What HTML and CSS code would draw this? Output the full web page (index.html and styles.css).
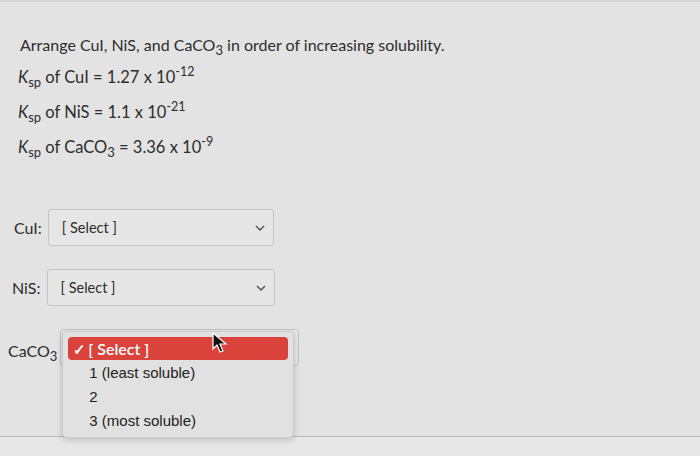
FILE: index.html
```html
<!DOCTYPE html>
<html lang="en">
<head>
    <meta charset="UTF-8">
    <title>Solubility Order</title>
    <link rel="stylesheet" href="styles.css">
</head>
<body>
    <div class="question">
        <div class="question-text">
            <p class="intro">Arrange CuI, NiS, and CaCO<sub>3</sub> in order of increasing solubility.</p>
            <p class="ksp"><i>K</i><sub>sp</sub> of CuI = 1.27 x 10<sup>-12</sup></p>
            <p class="ksp"><i>K</i><sub>sp</sub> of NiS = 1.1 x 10<sup>-21</sup></p>
            <p class="ksp"><i>K</i><sub>sp</sub> of CaCO<sub>3</sub> = 3.36 x 10<sup>-9</sup></p>
        </div>

        <div class="answers">
            <div class="answer-row row-cui">
                <span class="answer-label">CuI:</span>
                <div class="select-box">
                    <span>[ Select ]</span>
                    <svg class="caret" width="10" height="6" viewBox="0 0 10 6"><path d="M1 1 L5 5 L9 1" fill="none" stroke="#555" stroke-width="1.5"/></svg>
                </div>
            </div>
            <div class="answer-row row-nis">
                <span class="answer-label">NiS:</span>
                <div class="select-box">
                    <span>[ Select ]</span>
                    <svg class="caret" width="10" height="6" viewBox="0 0 10 6"><path d="M1 1 L5 5 L9 1" fill="none" stroke="#555" stroke-width="1.5"/></svg>
                </div>
            </div>
            <div class="answer-row row-caco3">
                <span class="answer-label">CaCO<sub>3</sub></span>
                <div class="select-box open">
                    <svg class="caret small" width="6" height="6" viewBox="0 0 6 6"><path d="M1 5 L4 1" fill="none" stroke="#555" stroke-width="1.2"/></svg>
                    <!-- native dropdown list, open -->
                    <ul class="menu">
                        <li class="picked"><span class="check">✓</span>[ Select ]</li>
                        <li>1 (least soluble)</li>
                        <li>2</li>
                        <li>3 (most soluble)</li>
                    </ul>
                    <svg class="pointer" width="16" height="22" viewBox="0 0 16 22">
                        <path d="M1 1 L1 17 L5 13 L8 20 L11 19 L8 12 L14 12 Z" fill="#111" stroke="#fff" stroke-width="1.2"/>
                    </svg>
                </div>
            </div>
        </div>
    </div>
    <div class="footer-rule"></div>
</body>
</html>
```

FILE: styles.css
```css
body {
    margin: 0;
    background: #e3e3e3;
    color: #2d2d2d;
    font-family: Lato, "Open Sans", sans-serif;
    width: 700px;
    height: 456px;
    overflow: hidden;
    border-top: 2px solid #d4d4d4;
    box-sizing: border-box;
}
.question {
    height: 434px;
    padding: 0 0 0 20px;
    box-sizing: border-box;
}
.question-text {
    padding-top: 28px;
}
.question-text p {
    margin: 0;
    height: 35px;
    font-size: 16px;
    line-height: 35px;
}
.question-text p.intro {
    height: 30px;
    line-height: 30px;
}
.question-text p.ksp {
    margin-left: -2px;
    font-size: 16.5px;
}
sub {
    font-size: 13px;
    vertical-align: -4px;
    line-height: 0;
}
sup {
    font-size: 12.5px;
    vertical-align: 7px;
    line-height: 0;
}
.answers {
    padding-top: 44px;
}
.answer-row {
    display: flex;
    align-items: center;
    gap: 6px;
    height: 37px;
    margin-bottom: 23px;
    font-size: 16px;
}
.row-cui { margin-left: -6px; }
.row-nis { margin-left: -8px; }
.row-caco3 { margin-left: -12px; gap: 3px; }
.row-caco3 .answer-label { margin-top: 6px; }
.select-box {
    position: relative;
    width: 226px;
    height: 37px;
    box-sizing: border-box;
    border: 1px solid #c4c4c4;
    border-radius: 3px;
    background: #e6e6e6;
    display: flex;
    align-items: center;
    justify-content: space-between;
    padding: 0 8px 0 13px;
    font-size: 14.5px;
}
.row-nis .select-box { width: 228px; }
.row-caco3 .select-box { width: 239px; justify-content: flex-end; }
.caret.small { margin-top: -10px; margin-right: -4px; }
.menu {
    position: absolute;
    left: 1px;
    top: 1px;
    width: 232px;
    margin: 0;
    padding: 5px 5px 4px 5px;
    box-sizing: border-box;
    list-style: none;
    background: #e1e1e1;
    border: 1px solid #cacaca;
    border-radius: 5px;
    box-shadow: 0 2px 6px rgba(0, 0, 0, 0.18);
    font-family: "Liberation Sans", Arial, sans-serif;
    font-size: 15px;
    color: #222;
}
.menu li {
    height: 24px;
    line-height: 24px;
    padding-left: 21px;
}
.menu li.picked {
    background: #d9433c;
    color: #fff;
    border-radius: 4px;
    padding-left: 5px;
    height: 23px;
    line-height: 23px;
    margin-bottom: 1px;
    font-family: Lato, sans-serif;
    font-size: 16px;
    font-weight: 600;
}
.check {
    display: inline-block;
    width: 15px;
    font-size: 15px;
    font-weight: 700;
}
.pointer {
    position: absolute;
    left: 151px;
    top: 2px;
}
.footer-rule {
    border-top: 1px solid #b9b9b9;
    height: 20px;
    background: #e7e7e7;
}
```
